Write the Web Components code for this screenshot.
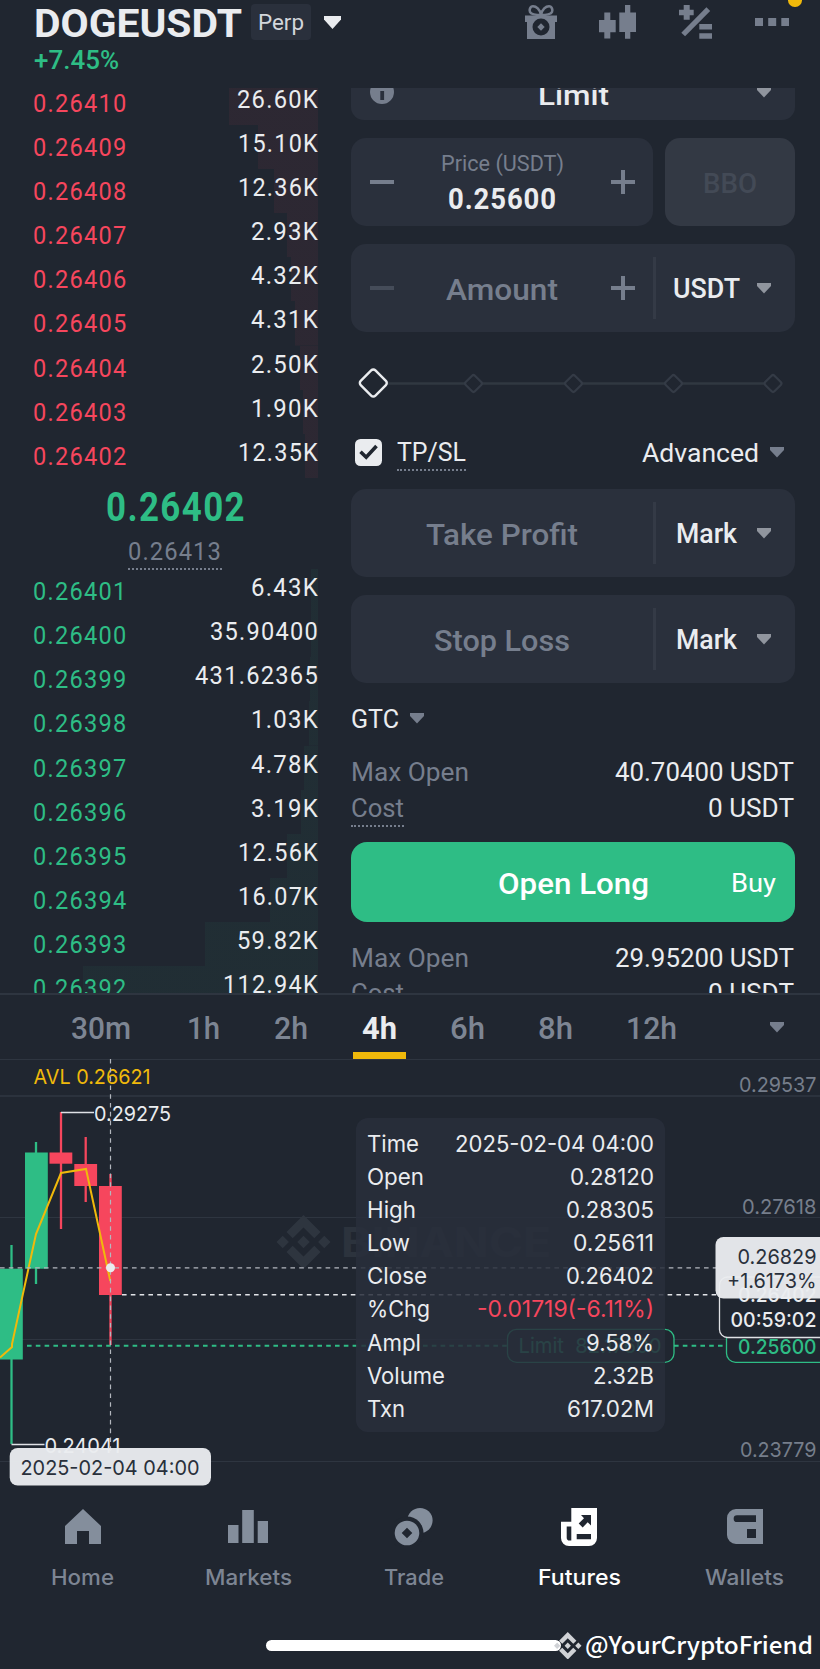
<!DOCTYPE html>
<html lang="en">
<head>
<meta charset="utf-8">
<title>DOGEUSDT Perp</title>
<style>
  :root {
    --bg: #202630;
    --box: #2a303c;
    --line: #2e3540;
    --text: #eaecef;
    --muted: #767e8d;
    --green: #2ebd85;
    --red: #f6465d;
    --yellow: #f0b90b;
  }
  body {
    margin: 0;
    width: 820px;
    height: 1669px;
    overflow: hidden;
    background: var(--bg);
    color: var(--text);
    font-family: Roboto, "Liberation Sans", sans-serif;
  }
  main {
    display: grid;
    grid-template-columns: 284px 444px;
    column-gap: 33px;
    padding-left: 34px;
    height: 905px;
    overflow: hidden;
    align-items: start;
  }
</style>
</head>
<body>
<pair-header></pair-header>
<main>
  <order-book></order-book>
  <order-form></order-form>
</main>
<interval-tabs></interval-tabs>
<kline-chart></kline-chart>
<bottom-nav></bottom-nav>
<home-bar></home-bar>

<script>
const ICONS = {
  arrow: [14, 11, '<path d="M0 0h14v3L7 10.5 0 3z"/>'],
  arrowBig: [17, 13, '<path d="M0 0h17v3.500L8.500 13 0 3.500z"/>'],
  gift: [32, 34, `<g fill="none" stroke="currentColor" stroke-width="2.6"><path d="M16 10C15 4 11 1.300 8 1.300S4 5 5 7s5 3 11 3zM16 10c1-6 5-8.700 8-8.700s4 3.700 3 5.700-5 3-11 3z"/></g>
    <path fill-rule="evenodd" d="M0 10.500h32V17h-2v17H2V17H0zM16 13.500a8.500 8.500 0 1 0 0 17 8.500 8.500 0 1 0 0-17z"/><path d="M16 18.300l3.700 3.700-3.700 3.700-3.700-3.700z"/>`],
  candles: [37, 34, '<path d="M5.300 7.500h6V15h5.400v12.300h-5.400v6.200h-6v-6.200H0V15h5.300zM26 0h5.300v7.500H37V27h-5.700v6.700H26V27h-5.700V7.500H26z"/>'],
  calc: [33.3, 34, '<path d="M4.700 0h6v4.700h4v5.600h-4v4.400h-6v-4.400H0V4.700h4.700zM20.300 19h13v5.500h-13zM20.300 28.200h13v5.500h-13z"/><path d="M4.200 29.500L29.300 4.200" stroke="currentColor" stroke-width="5.300"/>'],
  dots: [34.5, 8, '<path d="M0 0h8v8H0zM13.200 0h8v8h-8zM26.300 0h8v8h-8z"/>'],
  minus: [24, 24, '<path d="M0 10h24v4H0z"/>'],
  plus: [24, 24, '<path d="M0 10h10V0h4v10h10v4H14v10h-4V14H0z"/>'],
  info: [24, 24, '<path fill-rule="evenodd" d="M12 0a12 12 0 1 0 0 24 12 12 0 1 0 0-24zM10.300 11h3.800v9h-3.800z"/>'],
  check: [27, 27, '<rect width="27" height="27" rx="5.500"/><path d="M5.500 12.800l5.700 5.400L21.500 7" fill="none" stroke="#202630" stroke-width="3.600"/>'],
  home: [36, 35, '<path d="M0 17L18 0l18 17v18H24V22H12v13H0z"/>'],
  markets: [40, 33, '<path d="M0 15h10.500v18H0zM14.200 0h11.600v33H14.200zM29.700 11H40v22H29.700z"/>'],
  trade: [39, 39, `<circle cx="26" cy="13.500" r="12.600"/><circle cx="13" cy="26" r="16.500" fill="#202630"/>
    <path fill-rule="evenodd" d="M13 13.700a12.300 12.300 0 1 0 0 24.600 12.300 12.300 0 1 0 0-24.600zM13 20.700l5.300 5.300-5.300 5.300L7.700 26z"/>`],
  futures: [36, 38, `<path d="M10.300 0H36v30a8 8 0 0 1-8 8H8a8 8 0 0 1-8-8V13.700h10.300z"/>
    <path fill="#202630" d="M10.300 18.500v14H8.500a2.800 2.800 0 0 1-2.800-2.800V18.500zM15.700 26H30v5.300H15.700zM20 7h10v10.500l-3.300-3.300-5 5.300-4-4 5.300-5.300z"/>`],
  wallets: [36, 35, '<path fill-rule="evenodd" d="M9 0h27v35H9a9 9 0 0 1-9-9V9a9 9 0 0 1 9-9zM10 6.300a3.300 3.300 0 0 0 0 6.700h19V6.300zM20 20h9v9h-9z"/>'],
  logo: [54, 54, `<path d="M27 0l17 17-6.200 6.200L27 12.400 16.200 23.200 10 17zM27 54L10 37l6.200-6.200L27 41.600l10.800-10.800L44 37zM27 20.800l6.200 6.200-6.200 6.200-6.200-6.200zM6.200 20.800l6.200 6.200-6.200 6.200L0 27zM47.800 20.800L54 27l-6.200 6.200-6.200-6.200z"/>`]
};

class UiIcon extends HTMLElement {
  connectedCallback() {
    const [w, h, body] = ICONS[this.getAttribute('name')];
    const width = this.getAttribute('size') || w;
    this.attachShadow({ mode: 'open' });
    this.shadowRoot.innerHTML = `
      <style>
        :host { display: block; flex: none; color: var(--muted); }
        svg { display: block; fill: currentColor; }
      </style>
      <svg width="${width}" height="${width * h / w}" viewBox="0 0 ${w} ${h}">${body}</svg>
    `;
  }
}
customElements.define('ui-icon', UiIcon);

// One line of text, condensed or stretched to the width in "w"
class FitText extends HTMLElement {
  connectedCallback() {
    const w = Number(this.getAttribute('w'));
    this.attachShadow({ mode: 'open' });
    this.shadowRoot.innerHTML = `
      <style>
        :host { display: block; flex: none; width: ${w}px; text-align: left; white-space: nowrap; }
        span { display: block; width: max-content; transform-origin: 0 50%; }
      </style>
      <span><slot></slot></span>
    `;
    const span = this.shadowRoot.querySelector('span');
    span.style.transform = `scaleX(${w / span.getBoundingClientRect().width})`;
  }
}
customElements.define('fit-text', FitText);

class PairHeader extends HTMLElement {
  connectedCallback() {
    this.attachShadow({ mode: 'open' });
    this.shadowRoot.innerHTML = `
      <style>
        :host { display: block; position: relative; height: 88px; overflow: hidden; }
        .row { display: flex; align-items: center; height: 44px; padding: 0 31px 0 34px; }
        .pair { font-size: 38.5px; font-weight: 700; line-height: 44px; padding-top: 3px; }
        .badge { display: flex; justify-content: center; width: 60px; margin: 0 13px 0 9px; background: var(--box); border-radius: 4px; font-size: 21.5px; line-height: 36px; color: #d3d6db; }
        .badge fit-text { padding-top: 1px; margin-bottom: -1px; }
        .tools { display: flex; align-items: center; gap: 42.5px; margin-left: auto; }
        .change { padding-left: 34px; font-size: 26px; line-height: 32px; font-weight: 500; color: var(--green); }
        .dot { position: absolute; left: 788px; top: -7px; width: 13.5px; height: 13.5px; border-radius: 50%; background: var(--yellow); }
      </style>
      <div class="row">
        <fit-text class="pair" w="208">DOGEUSDT</fit-text>
        <div class="badge"><fit-text w="46">Perp</fit-text></div>
        <ui-icon name="arrowBig" style="color:#eaecef"></ui-icon>
        <div class="tools">
          <ui-icon name="gift"></ui-icon>
          <ui-icon name="candles"></ui-icon>
          <ui-icon name="calc"></ui-icon>
          <ui-icon name="dots"></ui-icon>
        </div>
      </div>
      <div class="change"><fit-text w="85">+7.45%</fit-text></div>
      <div class="dot"></div>
    `;
  }
}
customElements.define('pair-header', PairHeader);

class BookRow extends HTMLElement {
  connectedCallback() {
    const get = name => this.getAttribute(name);
    const color = get('side') === 'ask' ? 'red' : 'green';
    const tint = color === 'red' ? 'rgba(246, 70, 93, .06)' : 'rgba(46, 189, 133, .05)';
    this.attachShadow({ mode: 'open' });
    this.shadowRoot.innerHTML = `
      <style>
        :host {
          display: flex; justify-content: space-between; height: 44.17px; line-height: 43px; font-size: 26.5px; letter-spacing: 1.4px;
          background: linear-gradient(${tint}, ${tint}) right / ${get('depth')}px 100% no-repeat;
        }
        .price { color: var(--${color}); margin-left: -1px; }
        .amount { line-height: 35px; margin-right: -1px; }
      </style>
      <fit-text class="price" w="94.5">${get('price')}</fit-text>
      <fit-text class="amount" w="${get('w')}">${get('amount')}</fit-text>
    `;
  }
}
customElements.define('book-row', BookRow);

class OrderBook extends HTMLElement {
  connectedCallback() {
    const asks = [
      ['0.26410', '26.60K', 89, 82], ['0.26409', '15.10K', 60, 81], ['0.26408', '12.36K', 44, 81],
      ['0.26407', '2.93K', 31, 68], ['0.26406', '4.32K', 27, 68], ['0.26405', '4.31K', 23, 68],
      ['0.26404', '2.50K', 18, 68], ['0.26403', '1.90K', 15, 68], ['0.26402', '12.35K', 13, 81]
    ];
    const bids = [
      ['0.26401', '6.43K', 7, 68], ['0.26400', '35.90400', 7, 109], ['0.26399', '431.62365', 8, 124],
      ['0.26398', '1.03K', 9, 68], ['0.26397', '4.78K', 14, 68], ['0.26396', '3.19K', 17, 68],
      ['0.26395', '12.56K', 31, 81], ['0.26394', '16.07K', 48, 81], ['0.26393', '59.82K', 113, 82],
      ['0.26392', '112.94K', 235, 96]
    ];
    const rows = (side, list) => list.map(([price, amount, depth, w]) =>
      `<book-row side="${side}" price="${price}" amount="${amount}" depth="${depth}" w="${w}"></book-row>`).join('');
    this.attachShadow({ mode: 'open' });
    this.shadowRoot.innerHTML = `
      <style>
        :host { display: block; margin-top: -7.33px; }
        .mid { display: flex; flex-direction: column; align-items: center; height: 90.8px; }
        .last { font-size: 40px; line-height: 60px; font-weight: 700; letter-spacing: 1.6px; color: var(--green); }
        .mark { margin: -3px 2px 0 0; font-size: 26.5px; line-height: 32px; letter-spacing: 1.2px; color: var(--muted); padding-bottom: 1px; border-bottom: 2px dotted var(--muted); }
      </style>
      ${rows('ask', asks)}
      <div class="mid">
        <fit-text class="last" w="140">0.26402</fit-text>
        <fit-text class="mark" w="94">0.26413</fit-text>
      </div>
      ${rows('bid', bids)}
    `;
  }
}
customElements.define('order-book', OrderBook);

// Rounded field: slotted label in the middle, optional steppers and unit select
class FormField extends HTMLElement {
  connectedCallback() {
    const unit = this.getAttribute('unit');
    const steps = this.hasAttribute('steps');
    const minus = this.getAttribute('minus') || 'var(--muted)';
    this.attachShadow({ mode: 'open' });
    this.shadowRoot.innerHTML = `
      <style>
        :host { display: flex; align-items: center; height: 88.3px; background: var(--box); border-radius: 15px; }
        .main { display: flex; align-items: center; justify-content: space-between; width: 302px; box-sizing: border-box; padding: 0 18.5px 0 19px; }
        .label { flex: 1; display: flex; flex-direction: column; align-items: center; font-size: 29.5px; font-weight: 500; color: var(--muted); ${unit ? 'padding-top: 4px;' : ''} }
        .divider { width: 2.5px; height: 62px; background: #343a46; }
        .unit { flex: 1; display: flex; justify-content: center; padding-top: 2px; font-size: 27px; font-weight: 500; }
        .pick { margin-right: 24px; color: #90959e; }
      </style>
      <div class="main">
        ${steps ? `<ui-icon name="minus" style="color:${minus}"></ui-icon>` : ''}
        <div class="label"><slot></slot></div>
        ${steps ? '<ui-icon name="plus"></ui-icon>' : ''}
      </div>
      ${unit ? `
        <div class="divider"></div>
        <div class="unit"><fit-text w="${unit === 'USDT' ? 67 : 61}">${unit}</fit-text></div>
        <ui-icon class="pick" name="arrow"></ui-icon>` : ''}
    `;
  }
}
customElements.define('form-field', FormField);

class PercentSlider extends HTMLElement {
  connectedCallback() {
    const stops = [122.5, 222.5, 322.5, 422];
    this.attachShadow({ mode: 'open' });
    this.shadowRoot.innerHTML = `
      <style>
        :host { display: flex; align-items: center; height: 101.4px; }
        svg { display: block; fill: var(--bg); }
      </style>
      <svg width="444" height="40" viewBox="0 0 444 40">
        <path d="M22 20.500H422" stroke="#303841" stroke-width="2.400"/>
        ${stops.map(x => `<rect x="${x - 6.5}" y="14" width="13" height="13" rx="2" transform="rotate(45 ${x} 20.500)" stroke="#343b46" stroke-width="2.200"/>`).join('')}
        <rect x="11.900" y="9.600" width="20.800" height="20.800" rx="3" transform="rotate(45 22.300 20)" stroke="#eaecef" stroke-width="2.400"/>
      </svg>
    `;
  }
}
customElements.define('percent-slider', PercentSlider);

class OrderForm extends HTMLElement {
  connectedCallback() {
    this.attachShadow({ mode: 'open' });
    this.shadowRoot.innerHTML = `
      <style>
        :host { display: block; margin-top: -24.3px; font-size: 26px; }
        .type { display: flex; align-items: center; justify-content: space-between; height: 56.6px; padding: 0 24px 0 19px; background: var(--box); border-radius: 13px; }
        .type fit-text { font-size: 28px; font-weight: 500; padding-top: 7px; margin-right: 5px; }
        .price { display: grid; grid-template-columns: 302px 130px; column-gap: 12px; margin: 17.7px 0; }
        .price .caption { font-size: 22.5px; font-weight: 400; line-height: 33px; }
        .price .value { font-size: 30px; font-weight: 700; line-height: 38px; letter-spacing: 1px; color: var(--text); }
        .bbo { display: flex; align-items: center; justify-content: center; background: #333944; border-radius: 15px; font-weight: 500; font-size: 27px; color: #434a56; }
        .bbo fit-text { padding-top: 4px; margin-right: 1px; }
        .line { display: flex; align-items: center; justify-content: space-between; height: 35.6px; }
        .line .name { color: var(--muted); }
        .line .num { margin-right: 1px; }
        .tpsl { height: 38.6px; margin-bottom: 16.7px; padding: 0 11px 0 4px; justify-content: flex-start; }
        .tpsl .adv { margin: 0 11px 0 auto; }
        .line .under { border-bottom: 2px dotted var(--muted); margin-top: 3px; padding-bottom: 2px; }
        .gtc { justify-content: flex-start; gap: 11px; height: 71.4px; }
        .gap { margin-top: 17.7px; }
        .buy { display: grid; grid-template-columns: 1fr auto 1fr; align-items: center; height: 79.7px; margin: 16.6px 0 18px; border-radius: 16px; background: var(--green); color: #fff; }
        .buy .open { grid-column: 2; font-size: 29.5px; font-weight: 500; padding-top: 3px; }
        .buy .side { justify-self: end; margin-right: 19px; padding-top: 1px; }
      </style>
      <div class="type">
        <ui-icon name="info"></ui-icon>
        <fit-text w="71">Limit</fit-text>
        <ui-icon name="arrow" style="color:#90959e"></ui-icon>
      </div>
      <div class="price">
        <form-field steps>
          <fit-text class="caption" w="123">Price (USDT)</fit-text>
          <fit-text class="value" w="109">0.25600</fit-text>
        </form-field>
        <div class="bbo"><fit-text w="54">BBO</fit-text></div>
      </div>
      <form-field steps minus="#454c59" unit="USDT"><fit-text w="112">Amount</fit-text></form-field>
      <percent-slider></percent-slider>
      <div class="line tpsl">
        <ui-icon name="check" style="color:#eaecef"></ui-icon>
        <fit-text class="under" w="69" style="margin-left:15px">TP/SL</fit-text>
        <fit-text class="adv" w="117">Advanced</fit-text>
        <ui-icon name="arrow"></ui-icon>
      </div>
      <form-field unit="Mark"><fit-text w="152">Take Profit</fit-text></form-field>
      <form-field class="gap" unit="Mark"><fit-text w="136">Stop Loss</fit-text></form-field>
      <div class="line gtc"><fit-text w="48">GTC</fit-text><ui-icon name="arrow"></ui-icon></div>
      <div class="line"><fit-text class="name" w="118">Max Open</fit-text><fit-text class="num" w="179">40.70400 USDT</fit-text></div>
      <div class="line"><fit-text class="name under" w="53">Cost</fit-text><fit-text class="num" w="86">0 USDT</fit-text></div>
      <div class="buy"><fit-text class="open" w="151">Open Long</fit-text><fit-text class="side" w="45">Buy</fit-text></div>
      <div class="line"><fit-text class="name" w="118">Max Open</fit-text><fit-text class="num" w="179">29.95200 USDT</fit-text></div>
      <div class="line"><fit-text class="name" w="53">Cost</fit-text><fit-text class="num" w="86">0 USDT</fit-text></div>
    `;
  }
}
customElements.define('order-form', OrderForm);

class IntervalTabs extends HTMLElement {
  connectedCallback() {
    this.attachShadow({ mode: 'open' });
    this.shadowRoot.innerHTML = `
      <style>
        :host { display: flex; box-sizing: border-box; height: 66px; padding: 0 36px 0 61px; border-top: 2px solid var(--line); font-size: 30.5px; font-weight: 500; color: #7d8593; }
        .tab { display: flex; justify-content: center; padding: 0 10px; margin-right: 33px; line-height: 67px; height: 64px; box-sizing: border-box; }
        .active { color: var(--text); font-weight: 700; border-bottom: 7px solid var(--yellow); }
        ui-icon { margin: 27px 0 0 auto; }
      </style>
      <div class="tab" style="margin-right:36px"><fit-text w="60">30m</fit-text></div>
      <div class="tab" style="margin-right:34px"><fit-text w="33">1h</fit-text></div>
      <div class="tab" style="margin-right:35px"><fit-text w="34">2h</fit-text></div>
      <div class="tab active" style="padding:0 9px;margin-right:34px"><fit-text w="35">4h</fit-text></div>
      <div class="tab"><fit-text w="35">6h</fit-text></div>
      <div class="tab"><fit-text w="35">8h</fit-text></div>
      <div class="tab"><fit-text w="51">12h</fit-text></div>
      <ui-icon name="arrow"></ui-icon>
    `;
  }
}
customElements.define('interval-tabs', IntervalTabs);

class CandleInfo extends HTMLElement {
  connectedCallback() {
    const rows = [
      ['Time', 52, '2025-02-04 04:00', 199], ['Open', 57, '0.28120', 84], ['High', 49, '0.28305', 88],
      ['Low', 43, '0.25611', 81], ['Close', 60, '0.26402', 88], ['%Chg', 63, '-0.01719(-6.11%)', 177],
      ['Ampl', 54, '9.58%', 68], ['Volume', 78, '2.32B', 61], ['Txn', 38, '617.02M', 87]
    ];
    this.attachShadow({ mode: 'open' });
    this.shadowRoot.innerHTML = `
      <style>
        :host {
          display: block; box-sizing: border-box; width: 309px; height: 313.5px; padding: 8.5px 11px 10px 10.5px;
          background: rgba(41, 47, 59, .86); border-radius: 12px;
          font-size: 22.5px; line-height: 33.17px;
        }
        div { display: flex; justify-content: space-between; }
        .down { color: var(--red); }
      </style>
      ${rows.map(([name, nw, value, vw]) => `
        <div><fit-text w="${nw}">${name}</fit-text><fit-text w="${vw}" class="${name === '%Chg' ? 'down' : ''}">${value}</fit-text></div>
      `).join('')}
    `;
  }
}
customElements.define('candle-info', CandleInfo);

class KlineChart extends HTMLElement {
  connectedCallback() {
    const green = '#2ebd85', red = '#f6465d';
    // color, body left, body top, body bottom, wick x, high, low
    const candles = [
      [green, 0, 1268.7, 1359.5, 11.5, 1245, 1444],
      [green, 25, 1152.5, 1268.7, 36, 1142, 1284],
      [red, 49.5, 1152.5, 1163.7, 61, 1112, 1229],
      [red, 74.3, 1164, 1186, 85.7, 1137, 1202],
      [red, 99, 1186, 1295, 110.5, 1174, 1345]
    ];
    const text = (x, y, w, fill, value, extra = '') =>
      `<text x="${x}" y="${y}" textLength="${w}" lengthAdjust="spacingAndGlyphs" fill="${fill}" ${extra}>${value}</text>`;
    this.attachShadow({ mode: 'open' });
    this.shadowRoot.innerHTML = `
      <style>
        :host { display: block; position: relative; height: 435px; font-family: Inter, "Liberation Sans", sans-serif; }
        svg { display: block; font-size: 20.5px; }
        text { white-space: pre; }
        candle-info { position: absolute; left: 356px; top: 59px; }
      </style>
      <svg width="820" height="435" viewBox="0 1059 820 435">
        <path d="M0 1059.500h820M0 1217.500h820M0 1339.500h820M0 1461.500h820" stroke="#2e3540"/>
        <path d="M0 1096h820" stroke="#2b323d" stroke-width="2"/>
        <g fill="#2e353f" transform="translate(276.500 1215)">${ICONS.logo[2]}</g>
        ${text(341, 1256.7, 210, '#2c333d', 'BINANCE', 'font-size="41" font-weight="700"')}
        ${text(33.5, 1083.9, 117, '#f0b90b', 'AVL 0.26621')}
        ${candles.map(([c, x, top, bottom, wx, hi, lo]) =>
          `<path d="M${wx} ${hi}V${lo}" stroke="${c}" stroke-width="2.300"/><rect x="${x}" y="${top}" width="22.800" height="${bottom - top}" fill="${c}"/>`).join('')}
        <path d="M61 1112.500h33M11.500 1444.500h33" stroke="#dfe1e5" stroke-width="1.300"/>
        ${text(94, 1120.9, 77, '#eaecef', '0.29275')}
        ${text(44.5, 1452.7, 76, '#eaecef', '0.24041')}
        <path d="M27 1345.700h480M674 1345.700h53" stroke="${green}" stroke-width="1.900" stroke-dasharray="4.600 4.200"/>
        <path d="M122 1294.800h598" stroke="#e2e4e8" stroke-width="1.400" stroke-dasharray="4.600 4.200"/>
        <path d="M0 1357.500l12-10.500v-3l24-110 25-61 25-4 24.300 112" fill="none" stroke="#f0b90b" stroke-width="2"/>
        <path d="M0 1267.800h716M110.500 1059v392" fill="none" stroke="#b3b7be" stroke-width="1.200" stroke-dasharray="4.600 4.200"/>
        <circle cx="110.500" cy="1267.800" r="4.500" fill="#eaecef"/>
        <rect x="507.500" y="1329.300" width="166.500" height="33" rx="9" fill="#202630" stroke="${green}" stroke-width="1.300"/>
        ${text(518.5, 1353.3, 143, green, 'Limit  82.17600')}
        ${text(739, 1092.2, 77.5, '#767e8b', '0.29537')}
        ${text(742, 1213.7, 74.5, '#767e8b', '0.27618')}
        ${text(740, 1457.2, 76.5, '#767e8b', '0.23779')}
        <rect x="726.500" y="1329.300" width="110" height="33" rx="9" fill="#202630" stroke="${green}" stroke-width="1.300"/>
        ${text(738, 1353.5, 78.5, green, '0.25600', 'font-weight="500"')}
        <path d="M840 1277H727.500a8 8 0 0 0-8 8v44.500a8 8 0 0 0 8 8H840" fill="#202630" stroke="#dfe1e5" stroke-width="1.300"/>
        ${text(738, 1302.3, 78.5, '#eaecef', '0.26402', 'font-weight="500"')}
        ${text(730.5, 1327, 86, '#eaecef', '00:59:02', 'font-weight="500"')}
        <path d="M840 1237H723.500a8 8 0 0 0-8 8v45.500a8 8 0 0 0 8 8H840z" fill="#eaecef" fill-opacity=".96"/>
        ${text(737.5, 1264, 79, '#29303b', '0.26829')}
        ${text(727, 1288, 89.5, '#29303b', '+1.6173%')}
        <rect x="9.700" y="1448" width="201.300" height="37.500" rx="8" fill="#eaecef" fill-opacity=".96"/>
        ${text(20.5, 1475, 179, '#29303b', '2025-02-04 04:00')}
      </svg>
      <candle-info></candle-info>
    `;
  }
}
customElements.define('kline-chart', KlineChart);

class BottomNav extends HTMLElement {
  connectedCallback() {
    const items = [['home', 'Home', 63], ['markets', 'Markets', 87], ['trade', 'Trade', 60], ['futures', 'Futures', 83], ['wallets', 'Wallets', 79]];
    this.attachShadow({ mode: 'open' });
    this.shadowRoot.innerHTML = `
      <style>
        :host { display: grid; grid-template-columns: repeat(5, 165.5px); height: 106px; padding-top: 11px; font: 500 21.5px/40px Inter, "Liberation Sans", sans-serif; color: #7d8593; }
        div { display: flex; flex-direction: column; align-items: center; }
        ui-icon { display: flex; align-items: center; height: 43px; margin-bottom: 9px; color: #848e9c; }
        .on, .on ui-icon { color: #fff; }
      </style>
      ${items.map(([icon, label, w]) => `
        <div class="${icon === 'futures' ? 'on' : ''}"><ui-icon name="${icon}"></ui-icon><fit-text w="${w}">${label}</fit-text></div>
      `).join('')}
    `;
  }
}
customElements.define('bottom-nav', BottomNav);

class HomeBar extends HTMLElement {
  connectedCallback() {
    this.attachShadow({ mode: 'open' });
    this.shadowRoot.innerHTML = `
      <style>
        :host { display: flex; align-items: center; box-sizing: border-box; height: 58px; padding: 11px 0 0 266px; }
        .bar { width: 295px; height: 11.5px; border-radius: 6px; background: #fff; }
        ui-icon { margin: 0 3px 0 -7px; color: #d0d2d6; }
        fit-text { margin-top: -4px; font: 500 24px/30px "Noto Sans CJK SC", sans-serif; color: #fff; }
      </style>
      <div class="bar"></div>
      <ui-icon name="logo" size="27.500"></ui-icon>
      <fit-text w="228">@YourCryptoFriend</fit-text>
    `;
  }
}
customElements.define('home-bar', HomeBar);
</script>
</body>
</html>
